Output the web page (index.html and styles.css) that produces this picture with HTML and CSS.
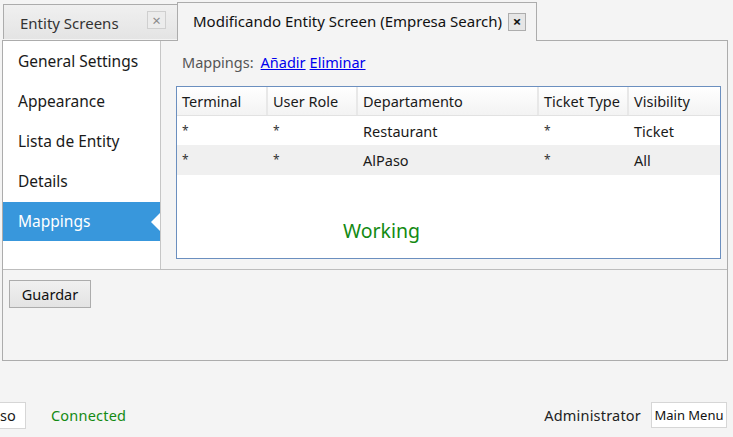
FILE: index.html
```html
<!DOCTYPE html>
<html>
<head>
<meta charset="utf-8">
<link rel="stylesheet" href="styles.css">
</head>
<body>
<div class="tabs">
  <div class="tab inactive">
    <span class="tab-title">Entity Screens</span>
    <span class="close light">×</span>
  </div>
  <div class="tab active">
    <span class="tab-title">Modificando Entity Screen (Empresa Search)</span>
    <span class="close dark">×</span>
  </div>
</div>
<div class="panel">
  <div class="top">
    <ul class="sidebar">
      <li>General Settings</li>
      <li>Appearance</li>
      <li>Lista de Entity</li>
      <li>Details</li>
      <li class="selected">Mappings</li>
    </ul>
    <div class="content">
      <div class="toolbar">
        <span class="label">Mappings:</span>
        <a href="#" class="link">Añadir</a>
        <a href="#" class="link">Eliminar</a>
      </div>
      <div class="grid">
        <div class="row head">
          <div class="c c1">Terminal</div>
          <div class="c c2">User Role</div>
          <div class="c c3">Departamento</div>
          <div class="c c4">Ticket Type</div>
          <div class="c c5">Visibility</div>
        </div>
        <div class="row">
          <div class="c c1 star">*</div>
          <div class="c c2 star">*</div>
          <div class="c c3">Restaurant</div>
          <div class="c c4 star">*</div>
          <div class="c c5">Ticket</div>
        </div>
        <div class="row alt">
          <div class="c c1 star">*</div>
          <div class="c c2 star">*</div>
          <div class="c c3">AlPaso</div>
          <div class="c c4 star">*</div>
          <div class="c c5">All</div>
        </div>
        <div class="working">Working</div>
      </div>
    </div>
  </div>
  <div class="bottom">
    <button class="btn">Guardar</button>
  </div>
</div>
<div class="status">
  <div class="left">
    <div class="box">so</div>
    <span class="connected">Connected</span>
  </div>
  <div class="right">
    <span class="user">Administrator</span>
    <button class="menu">Main Menu</button>
  </div>
</div>
</body>
</html>
```
FILE: styles.css
```css
* { box-sizing: border-box; }
html, body {
  margin: 0;
  padding: 0;
  background: #f4f4f4;
  font-family: "Noto Sans", "Open Sans", sans-serif;
  color: #1a1a1a;
  width: 733px;
  height: 437px;
  overflow: hidden;
}
.tabs {
  display: flex;
  align-items: flex-end;
  height: 40px;
  padding-left: 3px;
  position: relative;
  z-index: 2;
}
.tab {
  display: flex;
  align-items: center;
  border: 1px solid #acacac;
  border-bottom: none;
}
.tab.inactive {
  width: 175px;
  height: 35px;
  margin-bottom: 1px;
  padding: 0 11px 0 16px;
  justify-content: space-between;
  background: linear-gradient(#f0f0f0, #e4e4e4);
  color: #333;
  font-size: 15px;
}
.tab.active {
  width: 360px;
  height: 39px;
  margin-left: -1px;
  margin-bottom: -1px;
  padding: 0 10px 0 15px;
  justify-content: space-between;
  background: #f4f4f4;
  font-size: 15px;
  color: #111;
}
.tab-title { white-space: nowrap; }
.tab.inactive .tab-title { margin-top: 1px; }
.tab.active .tab-title { margin-top: -2px; }
.close {
  display: flex;
  align-items: center;
  justify-content: center;
  width: 19px;
  height: 18px;
  font-size: 15px;
  line-height: 1;
}
.close.light {
  border: 1px solid #cfcfcf;
  background: #ececec;
  color: #8a8a8a;
  margin-top: -4px;
}
.close.dark {
  border: 1px solid #adadad;
  background: #e6e6e6;
  color: #111;
  font-weight: bold;
  width: 18px;
  margin-top: -1px;
}
.panel {
  margin: 0 5px 0 2px;
  height: 321px;
  border: 1px solid #acacac;
  background: #f4f4f4;
  display: flex;
  flex-direction: column;
}
.top {
  display: flex;
  height: 229px;
  border-bottom: 1px solid #bdbdbd;
}
.sidebar {
  list-style: none;
  margin: 0;
  padding: 1px 0 0;
  width: 158px;
  background: #fff;
  border-right: 1px solid #c6c6c6;
}
.sidebar li {
  height: 40px;
  line-height: 39px;
  padding-left: 15px;
  font-size: 15.5px;
  color: #1a1a1a;
  position: relative;
}
.sidebar li.selected {
  background: #3897dc;
  color: #fff;
  height: 39px;
}
.sidebar li.selected::after {
  content: "";
  position: absolute;
  right: 0;
  top: 11px;
  border-top: 9px solid transparent;
  border-bottom: 9px solid transparent;
  border-right: 9px solid #fff;
}
.content {
  flex: 1;
  padding: 10px 6px 0 15px;
}
.toolbar {
  display: flex;
  align-items: center;
  height: 22px;
  font-size: 14.5px;
  margin: 0 0 13px 6px;
}
.toolbar .label {
  color: #555;
  margin-right: 7px;
}
.toolbar .link {
  color: #0000ee;
  text-decoration: underline;
  margin-right: 4px;
}
.grid {
  width: 545px;
  height: 173px;
  border: 1px solid #6b8fbf;
  background: #fff;
  position: relative;
  font-size: 14.5px;
}
.row {
  display: flex;
  height: 29px;
  align-items: center;
}
.row.head {
  height: 29px;
  background: linear-gradient(#ffffff, #f3f3f3);
  border-bottom: 1px solid #e2e2e2;
}
.row.alt { background: #f0f0f0; height: 30px; }
.c {
  height: 100%;
  display: flex;
  align-items: center;
  padding-left: 5px;
  white-space: nowrap;
}
.c.star {
  font-size: 12px;
  align-items: flex-start;
  padding-top: 6px;
  color: #333;
}
.head .c { border-right: 2px solid #e8e8e8; }
.head .c5 { border-right: none; }
.c1 { width: 91px; }
.c2 { width: 90px; }
.c3 { width: 181px; }
.c4 { width: 90px; }
.c5 { flex: 1; }
.working {
  position: absolute;
  left: 166px;
  top: 130px;
  color: #138a13;
  font-size: 19.5px;
}
.bottom {
  padding: 10px 0 0 6px;
}
.btn {
  width: 82px;
  height: 28px;
  border: 1px solid #acacac;
  background: linear-gradient(#f0f0f0, #e3e3e3);
  font-family: inherit;
  font-size: 14.5px;
  color: #111;
  padding: 0;
}
.status {
  margin-top: 41px;
  display: flex;
  justify-content: space-between;
  align-items: center;
  height: 26px;
  padding-right: 6px;
}
.left, .right {
  display: flex;
  align-items: center;
}
.box {
  width: 26px;
  height: 27px;
  margin-top: 1px;
  background: #fff;
  border: 1px solid #d6d6d6;
  border-left: none;
  font-size: 14.5px;
  padding-top: 2px;
  text-align: right;
  padding-right: 10px;
  white-space: nowrap;
}
.connected {
  margin-left: 25px;
  color: #138a13;
  font-size: 14.5px;
  letter-spacing: 0.2px;
}
.user {
  font-size: 14.5px;
  color: #222;
  margin-right: 10px;
  letter-spacing: 0.2px;
}
.menu {
  height: 26px;
  width: 76px;
  background: #fff;
  border: 1px solid #d6d6d6;
  font-family: inherit;
  font-size: 13px;
  padding: 0;
  color: #111;
}
```
